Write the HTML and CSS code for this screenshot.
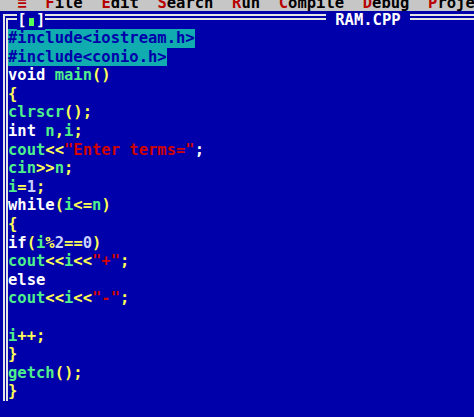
FILE: index.html
```html
<!DOCTYPE html>
<html lang="en">
<head>
    <meta charset="UTF-8">
    <meta name="viewport" content="width=device-width, initial-scale=1.0">
    <title>Turbo C++ - RAM.CPP</title>
    <link rel="stylesheet" href="styles.css">
</head>
<body>
    <div class="menubar">
        <div class="menu-text"> <span class="hot">≡</span>  <span class="hot">F</span>ile  <span class="hot">E</span>dit  <span class="hot">S</span>earch  <span class="hot">R</span>un  <span class="hot">C</span>ompile  <span class="hot">D</span>ebug  <span class="hot">P</span>roject  <span class="hot">O</span>ptions</div>
    </div>

    <div class="window">
        <div class="frame-outer">
            <div class="frame-inner">
                <div class="code">
                    <div class="line"><span class="sel">#include&lt;iostream.h&gt;</span></div>
                    <div class="line"><span class="sel">#include&lt;conio.h&gt;</span></div>
                    <div class="line"><span class="kw">void</span> <span class="id">main</span><span class="op">()</span></div>
                    <div class="line"><span class="op">{</span></div>
                    <div class="line"><span class="id">clrscr</span><span class="op">();</span></div>
                    <div class="line"><span class="kw">int</span> <span class="id">n</span><span class="op">,</span><span class="id">i</span><span class="op">;</span></div>
                    <div class="line"><span class="id">cout</span><span class="op">&lt;&lt;</span><span class="str">"Enter terms="</span><span class="kw">;</span></div>
                    <div class="line"><span class="id">cin</span><span class="op">&gt;&gt;</span><span class="id">n</span><span class="op">;</span></div>
                    <div class="line"><span class="id">i</span><span class="op">=</span><span class="num">1</span><span class="op">;</span></div>
                    <div class="line"><span class="kw">while</span><span class="op">(</span><span class="id">i</span><span class="op">&lt;=</span><span class="id">n</span><span class="op">)</span></div>
                    <div class="line"><span class="op">{</span></div>
                    <div class="line"><span class="kw">if</span><span class="op">(</span><span class="id">i</span><span class="op">%</span><span class="num">2</span><span class="op">==</span><span class="num">0</span><span class="op">)</span></div>
                    <div class="line"><span class="id">cout</span><span class="op">&lt;&lt;</span><span class="id">i</span><span class="op">&lt;&lt;</span><span class="str">"+"</span><span class="op">;</span></div>
                    <div class="line"><span class="kw">else</span></div>
                    <div class="line"><span class="id">cout</span><span class="op">&lt;&lt;</span><span class="id">i</span><span class="op">&lt;&lt;</span><span class="str">"-"</span><span class="op">;</span></div>
                    <div class="line"></div>
                    <div class="line"><span class="id">i</span><span class="op">++;</span></div>
                    <div class="line"><span class="op">}</span></div>
                    <div class="line"><span class="id">getch</span><span class="op">();</span></div>
                    <div class="line"><span class="op">}</span></div>
                </div>
            </div>
            <span class="close-box">[<span class="close-dot"></span>]</span>
            <span class="title"> RAM.CPP </span>
        </div>
    </div>
</body>
</html>
```

FILE: styles.css
```css
body {
    margin: 0;
    padding: 0;
    width: 474px;
    height: 417px;
    overflow: hidden;
    background-color: #0000aa;
    font-family: 'DejaVu Sans Mono', 'Liberation Mono', monospace;
    font-size: 15.5px;
    font-weight: bold;
}

.menubar {
    height: 11px;
    overflow: hidden;
    background-color: #c6c6c6;
    color: #000;
}

.menu-text {
    margin-top: -6px;
    padding-left: 8px;
    line-height: 18.6px;
    white-space: pre;
}

.menu-text .hot {
    color: #b80000;
}

.window {
    padding-top: 3px;
}

.frame-outer {
    position: relative;
    margin-left: 3px;
    padding: 2px 0 0 1px;
    border-top: 2px solid #e4e4e4;
    border-left: 2px solid #e4e4e4;
}

.frame-inner {
    border-top: 2px solid #e4e4e4;
    border-left: 2px solid #e4e4e4;
}

.close-box,
.title {
    position: absolute;
    top: -5px;
    height: 18.6px;
    line-height: 18.6px;
    background-color: #0000aa;
    color: #fff;
    white-space: pre;
}

.close-box {
    left: 12.3px;
}

.close-dot {
    display: inline-block;
    width: 9.35px;
    height: 8px;
    vertical-align: -1px;
    background: linear-gradient(to right, transparent 2px, #55ff55 2px, #55ff55 7px, transparent 7px);
}

.title {
    left: 320.9px;
}

.code {
    padding-top: 9px;
}

.line {
    height: 18.6px;
    line-height: 18.6px;
    white-space: pre;
}

.sel {
    display: inline-block;
    background-color: #10acb0;
    color: #0000aa;
}

.kw {
    color: #ffffff;
}

.id {
    color: #4ff08a;
}

.op {
    color: #ffff55;
}

.str {
    color: #d00000;
}

.num {
    color: #c8d0ff;
}
```
